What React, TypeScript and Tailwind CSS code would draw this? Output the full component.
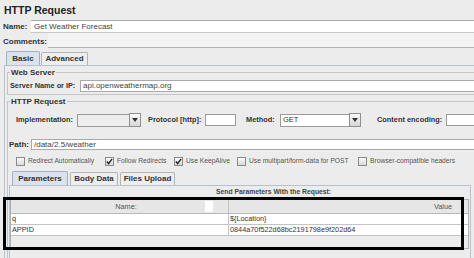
import React from "react";

const lbl = "font-bold text-[#333] whitespace-nowrap";

function Arrow() {
  return (
    <span className="w-[12px] h-full border border-[#8e8e8e] bg-gradient-to-b from-[#fbfbfb] to-[#d6d6d6] flex items-center justify-center">
      <svg viewBox="0 0 6 4" className="w-[6px] h-[4px]">
        <path d="M0 0 H6 L3 4 Z" fill="#333" />
      </svg>
    </span>
  );
}

function Check({ on, text, w }: { on?: boolean; text: string; w: string }) {
  return (
    <div className={`flex items-center ${w}`}>
      <span className="w-[9px] h-[9px] shrink-0 border border-[#8a8a8a] bg-gradient-to-b from-[#fafafa] to-[#d9d9d9] flex items-center justify-center">
        {on && (
          <svg viewBox="0 0 8 8" className="w-[7px] h-[7px]">
            <path d="M1 4 L3 6.5 L7 1" stroke="#222" strokeWidth="1.6" fill="none" />
          </svg>
        )}
      </span>
      <span className="ml-[3px] text-[6.7px] text-[#555] whitespace-nowrap">{text}</span>
    </div>
  );
}

function Tab({ text, on, w }: { text: string; on?: boolean; w: string }) {
  return (
    <div
      className={`${w} flex items-center justify-center border border-b-0 rounded-t-[2px] text-[8px] font-bold text-[#333] ${
        on ? "h-[14px] bg-[#dbe2ea] border-[#9fb0c4]" : "h-[13px] bg-[#eeeeee] border-[#b4b4b4]"
      }`}
    >
      {text}
    </div>
  );
}

export default function App() {
  return (
    <div className="relative w-[474px] h-[258px] overflow-hidden bg-[#ececec] font-['Liberation_Sans',Arial,sans-serif] text-[#333] leading-none">
      {/* title */}
      <div className="h-[20px] pl-[4px] pt-[4px] text-[10.5px] font-bold leading-[12px] text-[#222]">
        HTTP Request
      </div>

      {/* name */}
      <div className="h-[13px] flex items-center">
        <div className={`w-[31px] pl-[3px] text-[8px] ${lbl}`}>Name:</div>
        <div className="flex-1 h-full bg-white border-t border-[#a9a9a9] border-b border-b-[#c8c8c8] pl-[3px] flex items-center text-[8px] text-[#444]">
          Get Weather Forecast
        </div>
      </div>

      {/* comments */}
      <div className="h-[15px] flex">
        <div className={`w-[48px] pl-[3px] pt-[5px] text-[8px] ${lbl}`}>Comments:</div>
        <div className="flex-1 bg-[#f3f3f3] border-b border-[#b0b0b0]" />
      </div>

      {/* basic / advanced tabs */}
      <div className="h-[17px] pl-[6px] flex items-end gap-[1px]">
        <Tab text="Basic" on w="w-[34px]" />
        <Tab text="Advanced" w="w-[47px]" />
      </div>

      {/* basic panel */}
      <div className="ml-[4px] border-t border-l border-[#b6c1d2] pt-[1px] pl-[2px]">
        <fieldset className="border-t border-l border-b border-[#c4c4c4] pb-[2px]">
          <legend className={`ml-[2px] px-[1px] text-[8px] leading-[11px] ${lbl}`}>Web Server</legend>
          <div className="mt-[2px] h-[12px] flex items-center">
            <div className={`w-[72px] pl-[2px] text-[7.3px] ${lbl}`}>Server Name or IP:</div>
            <div className="flex-1 h-full bg-white border border-[#a9a9a9] border-r-0 pl-[2px] flex items-center text-[8px] text-[#444]">
              api.openweathermap.org
            </div>
          </div>
        </fieldset>

        <fieldset className="mt-[1px] border-t border-l border-[#c4c4c4]">
          <legend className={`ml-[2px] px-[1px] text-[8px] leading-[11px] ${lbl}`}>HTTP Request</legend>

          {/* implementation row */}
          <div className="mt-[6px] h-[14px] flex items-center pl-[8px] text-[7.4px]">
            <div className={`w-[61px] ${lbl}`}>Implementation:</div>
            <div className="w-[52px] h-[13px] bg-[#ededed] border border-[#9a9a9a] border-r-0" />
            <Arrow />
            <div className={`ml-[7px] w-[57px] ${lbl}`}>Protocol [http]:</div>
            <div className="w-[31px] h-[12px] bg-white border border-[#9a9a9a]" />
            <div className={`ml-[10px] w-[34px] ${lbl}`}>Method:</div>
            <div className="w-[69px] h-[13px] bg-white border border-[#9a9a9a] border-r-0 pl-[2px] flex items-center text-[7.5px] text-[#333]">
              GET
            </div>
            <Arrow />
            <div className={`ml-[16px] w-[69px] ${lbl}`}>Content encoding:</div>
            <div className="flex-1 h-[12px] bg-white border border-[#9a9a9a] border-r-0" />
          </div>

          {/* path */}
          <div className="mt-[12px] h-[11px] flex items-center pl-[1px]">
            <div className={`w-[22px] text-[8px] ${lbl}`}>Path:</div>
            <div className="flex-1 h-full bg-white border border-[#a9a9a9] border-r-0 pl-[2px] flex items-center text-[8px] text-[#444]">
              /data/2.5/weather
            </div>
          </div>

          {/* checkboxes */}
          <div className="mt-[6px] h-[10px] flex items-center pl-[8px]">
            <Check text="Redirect Automatically" w="w-[89px]" />
            <Check on text="Follow Redirects" w="w-[69px]" />
            <Check on text="Use KeepAlive" w="w-[63px]" />
            <Check text="Use multipart/form-data for POST" w="w-[121px]" />
            <Check text="Browser-compatible headers" w="w-[100px]" />
          </div>

          {/* parameter tabs */}
          <div className="mt-[5px] h-[14px] pl-[4px] flex items-end gap-[2px]">
            <Tab text="Parameters" on w="w-[56px]" />
            <Tab text="Body Data" w="w-[48px]" />
            <Tab text="Files Upload" w="w-[55px]" />
          </div>

          <div className="ml-[1px] mr-[3px] h-[80px] border-t border-l border-r border-[#b6c1d2] bg-[#ececec]">
            <div className="h-[13px] pl-[206px] flex items-center text-[6.8px] font-bold text-[#444] whitespace-nowrap">
              Send Parameters With the Request:
            </div>
            <div className="mr-[1px] border border-[#b0b0b0]">
              <div className="h-[14px] flex bg-[#e6e6e6] border-b border-[#b8b8b8] text-[7.3px] text-[#555]">
                <div className="w-[194px] flex items-center justify-center pl-[36px]">Name:</div>
                <div className="w-[8px] my-[1px] bg-white" />
                <div className="w-[16px] border-r border-[#c2c2c2]" />
                <div className="flex-1 flex items-center justify-end pr-[16px]">Value</div>
              </div>
              {[
                ["q", "${Location}"],
                ["APPID", "0844a70f522d68bc2191798e9f202d64"],
              ].map(([k, v]) => (
                <div key={k} className="h-[11px] flex bg-white border-b border-[#c4c4c4] text-[7.3px] text-[#333]">
                  <div className="w-[218px] pl-[1px] flex items-center border-r border-[#c4c4c4]">{k}</div>
                  <div className="flex-1 pl-[1px] flex items-center">{v}</div>
                </div>
              ))}
              <div className="h-[12px] bg-[#ececec]" />
            </div>
          </div>
        </fieldset>
      </div>

      {/* annotation frame */}
      <div className="absolute left-[3px] top-[197px] w-[461px] h-[53px] border-[3px] border-black" />
    </div>
  );
}
